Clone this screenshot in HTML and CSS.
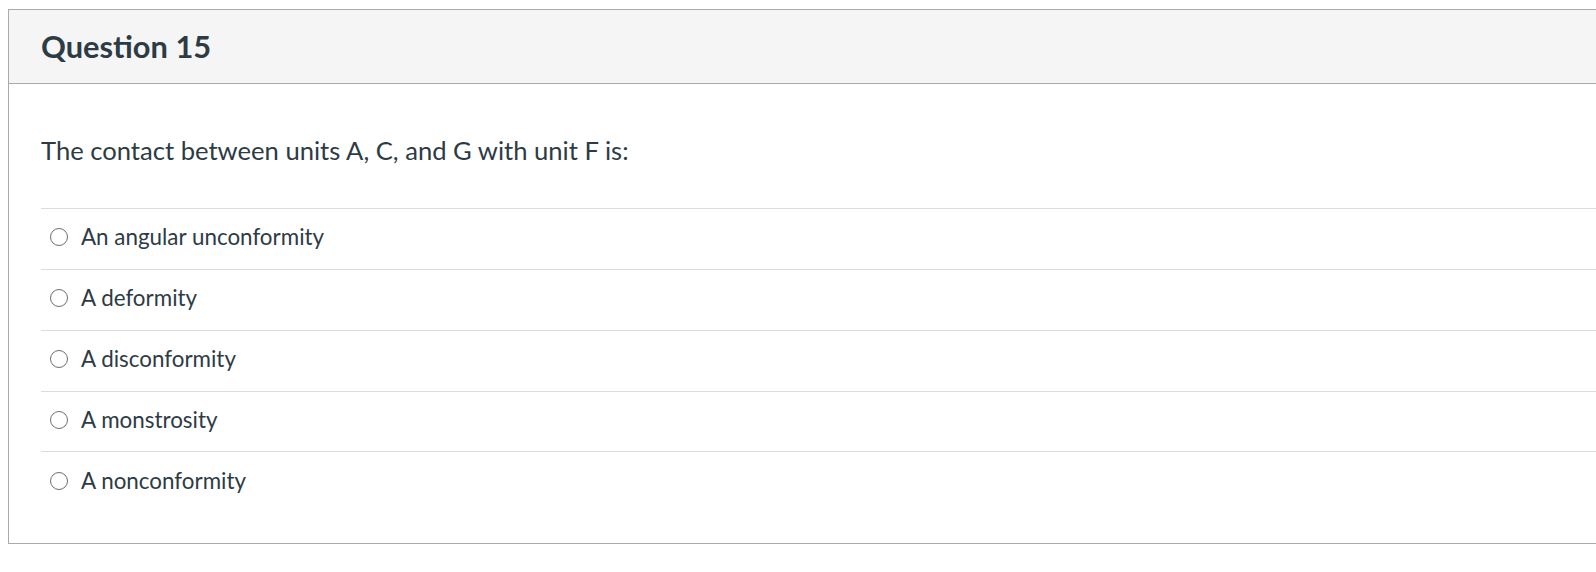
FILE: index.html
```html
<!DOCTYPE html>
<html>
<head>
<meta charset="utf-8">
<link rel="stylesheet" href="styles.css">
</head>
<body>
<div class="question">
  <div class="header"><h2 class="title">Question 15</h2></div>
  <div class="content">
    <p class="prompt">The contact between units A, C, and G with unit F is:</p>
    <div class="answers">
      <label class="answer"><span class="radio"></span><span class="label">An angular unconformity</span></label>
      <label class="answer"><span class="radio"></span><span class="label">A deformity</span></label>
      <label class="answer"><span class="radio"></span><span class="label">A disconformity</span></label>
      <label class="answer"><span class="radio"></span><span class="label">A monstrosity</span></label>
      <label class="answer"><span class="radio"></span><span class="label">A nonconformity</span></label>
    </div>
  </div>
</div>
</body>
</html>
```
FILE: styles.css
```css
html, body {
  margin: 0;
  padding: 0;
  background: #ffffff;
  overflow: hidden;
}
body {
  font-family: Lato, "Liberation Sans", sans-serif;
  color: #2d3b45;
}
.question {
  margin: 9px 0 0 8px;
  width: 1660px;
  border: 1px solid #aaaaaa;
}
.header {
  height: 73px;
  background: #f5f5f5;
  border-bottom: 1px solid #aaaaaa;
  display: flex;
  align-items: center;
  padding-left: 32px;
}
.title {
  margin: 0;
  font-size: 30.8px;
  font-weight: 700;
  line-height: 1;
  padding-top: 1px;
}
.content {
  padding: 48px 0 31px 32px;
}
.prompt {
  margin: 0 0 40px 0;
  font-size: 25.6px;
  line-height: 36px;
}
.answers {
  display: flex;
  flex-direction: column;
}
.answer {
  display: flex;
  align-items: center;
  box-sizing: border-box;
  height: 60.85px;
  border-top: 1px solid #dcdcdc;
  padding-left: 8.5px;
  padding-bottom: 3px;
  font-size: 22.4px;
}
.radio {
  width: 18px;
  height: 18px;
  box-sizing: border-box;
  border: 1.5px solid #6e6e6e;
  border-radius: 50%;
  background: #fff;
  flex: none;
  margin-right: 13.5px;
}
.label {
  line-height: 28px;
}
```
